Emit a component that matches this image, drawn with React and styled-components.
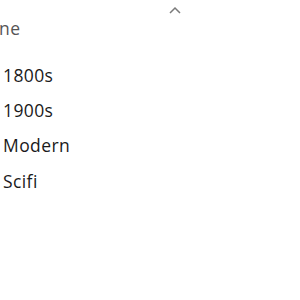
import React from "react";
import styled, { createGlobalStyle } from "styled-components";

const Global = createGlobalStyle`
  html, body {
    margin: 0;
    padding: 0;
    background: #ffffff;
  }
  body {
    font-family: "Open Sans", "Noto Sans", sans-serif;
  }
`;

const Panel = styled.div`
  width: 300px;
  height: 300px;
  overflow: hidden;
  box-sizing: border-box;
  background: #ffffff;
`;

const Header = styled.div`
  position: relative;
  height: 46px;
  display: flex;
  align-items: center;
  padding-top: 10px;
  box-sizing: border-box;
`;

const Current = styled.span`
  font-size: 17.5px;
  letter-spacing: 0.4px;
  color: #555555;
  margin-left: -1px;
`;

const Chevron = styled.svg`
  position: absolute;
  left: 169px;
  top: 6px;
  width: 12px;
  height: 8px;
`;

const List = styled.ul`
  list-style: none;
  margin: 11px 0 0 0;
  padding: 0;
`;

const Item = styled.li`
  height: 35.3px;
  display: flex;
  align-items: center;
  padding-left: 3px;
  font-size: 17.5px;
  letter-spacing: 0.4px;
  color: #1a1a1a;
`;

const options = ["1800s", "1900s", "Modern", "Scifi"];

export default function App() {
  return (
    <Panel>
      <Global />
      <Header>
        <Current>ne</Current>
        <Chevron viewBox="0 0 12 8">
          <path d="M1 7 L6 2 L11 7" fill="none" stroke="#7a7a7a" strokeWidth="1.5" />
        </Chevron>
      </Header>
      <List>
        {options.map((o) => (
          <Item key={o}>{o}</Item>
        ))}
      </List>
    </Panel>
  );
}
